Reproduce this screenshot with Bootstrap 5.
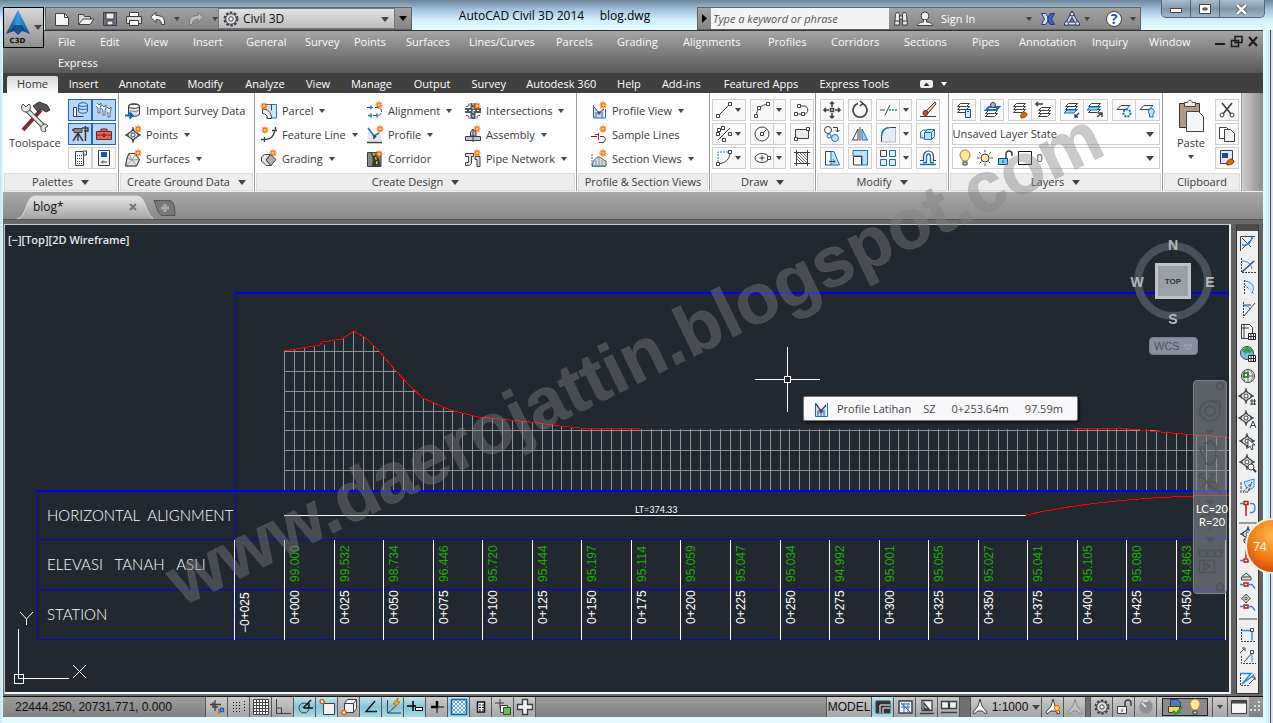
<!DOCTYPE html>
<html lang="en">
<head>
<meta charset="utf-8">
<meta name="viewport" content="width=device-width, initial-scale=1">
<title>AutoCAD Civil 3D 2014 - blog.dwg</title>
<link href="https://cdn.jsdelivr.net/npm/bootstrap@5.3.0/dist/css/bootstrap.min.css" rel="stylesheet">
<style>
:root{--ui:"Open Sans","Noto Sans",sans-serif;--cad:Lato,"Liberation Sans",sans-serif}
body{font:11px/16px var(--ui);color:#3a3a3a;background:#dff6fc;overflow:hidden}
button,select,input{font:inherit;color:inherit;border:0;padding:0;background:none;border-radius:0}
.frame{padding:0 10px 6px 3px;background:linear-gradient(90deg,#bfe4f4 0,#e4fbff 3px,#e4fbff calc(100% - 9px),#c5e9f8 calc(100% - 4px),#eafcff calc(100% - 3px),#445 calc(100% - 3px),#445 calc(100% - 2px),#e4e6ea calc(100% - 2px))}
.ic{width:16px;height:16px;flex:none;overflow:visible;fill:none;stroke:#3b3f46;stroke-width:1;display:block}
.caret{width:0;height:0;border:3px solid transparent;border-top:4px solid #444;border-bottom:0;flex:none}
.caret.big{border-width:4px 4px 0;border-top-width:5px}
/* title bar */
.glass{height:30px;margin:0 -10px 0 -3px;padding-left:45px;background:linear-gradient(#6c8498 0,#7d99ae 3px,#a4c4de 10px,#d2f0fb 20px,#e2ffff 30px)}
.bar3{background:linear-gradient(#a2a2a2,#858585);border:1px solid #626262;height:23px;margin-top:7px}
.qat{width:367px}
.doctitle{font-size:12px}
.appbtn{position:absolute;left:3px;top:7px;width:41px;height:41px;border:1px solid #000;background:linear-gradient(#d8d8d8,#8f8f8f);z-index:3}
.appbtn small{font:bold 7px/8px "DejaVu Sans",sans-serif;color:#111}
.ws{background:linear-gradient(#e3e3e3,#bcbcbc);border:1px solid #777;height:21px;color:#111;position:relative;font-size:12px}
.ws select,.combo select{appearance:none;width:100%;height:100%;outline:0}
.info{width:444px}
.info input{width:178px;height:21px;background:#f4f4f4;font-style:italic;padding-left:2px}
.info input::placeholder{color:#555}
.winbtns{width:104px;height:18px;border:1px solid #52687a;border-top:0;border-radius:0 0 5px 5px;background:linear-gradient(#a9bdcd,#7e97ab 9px,#9fb8ca);margin-left:20px;margin-right:8px}
.winbtns button{border-right:1px solid #52687a}
/* menus */
.menus{background:linear-gradient(#a6a6a6,#585858);border-top:1px solid #333;color:#fafafa;padding-left:55px}
.menulist{display:grid;grid-template-columns:42fr 44fr 49fr 53fr 59fr 49fr 52fr 63fr 87fr 61fr 66fr 85fr 63fr 73fr 68fr 47fr 73fr 57fr 66fr;flex:1;min-width:0}
.menulist a,.tabs3 a{color:inherit;text-decoration:none;white-space:nowrap;line-height:21px}
.tabs3{background:#404040;color:#fff;height:20px;display:grid;grid-template-columns:62fr 50fr 69fr 58fr 61fr 45fr 63fr 58fr 55fr 91fr 45fr 62fr 96fr 101fr 344fr;padding-left:4px}
.tabs3 a.home{background:linear-gradient(#d5d5d5,#fff);color:#333;width:51px;height:17px;margin-top:3px;line-height:16px;border-radius:2px 2px 0 0;text-align:center}
/* ribbon */
.ribbon{background:linear-gradient(90deg,#fff 92%,#fff 98.2%,#cfcfcf 98.3%,#8d8d8d);height:99px;border-bottom:1px solid #eee}
.pan{display:flex;flex-direction:column;background:#fdfdfd;border-right:1px solid #9a9a9a;min-width:0}
.pbody{height:80px;padding-top:6px;display:flex}
.ptitle{height:18px;background:#ededed;border:1px solid #dcdcdc;margin:0 1px;display:flex;align-items:center;justify-content:center;gap:8px;white-space:nowrap;line-height:16px}
.tool{display:flex;align-items:center;height:24px;gap:5px;white-space:nowrap}
.tool .caret{margin-left:1px}
.colm{display:flex;flex-direction:column}
.inset6{padding-left:6px}
.palrows{margin:0 2px 0 auto}
.rows{display:flex;flex-direction:column;gap:2px}
.rows>div{display:flex}
.sq{height:22px;width:24px;border:1px solid #cfcfcf;background:#f9f9f9;display:flex;align-items:center;justify-content:center;flex:none}
.sq+.joined{margin-left:-1px;width:25px}
.sq.on{background:#b9d5f3;border:1px solid #1f66b5}
.sq.s34{width:34px;gap:3px}
.sq.dd{width:13px;margin-left:-1px}
.bigtool{display:flex;flex-direction:column;align-items:center;line-height:16px}
.combo{height:22px;border:1px solid #cfcfcf;background:#fff;display:flex;align-items:center;position:relative;width:208px}
.over{position:absolute;right:5px;top:8px;pointer-events:none}
/* file tabs */
.ftabs{height:28px;background:linear-gradient(#a8a8a8,#8a8a8a);border-bottom:1px solid #555;padding-left:14px}
.ftab{width:136px;height:25px;margin-top:2px;position:relative;color:#111;font-size:12px}
.ftab>svg{position:absolute;inset:0}
.ftab span,.ftab button{position:relative}
/* drawing */
.work{background:#6a6a6a;padding:4px 0 2px 1px}
.canvas{background:#212830;border:1px solid #c8c8c8;border-bottom:2px solid #f2f2f2;border-right:2px solid #e8e8e8;position:relative;overflow:hidden}
.draw{position:absolute;left:-5px;top:-225px;width:1600px;height:1000px;overflow:visible;pointer-events:none}
.draw text{font-family:var(--cad)}
.lbl{font-size:15px;font-weight:300;fill:#fff}
.draw .num text{font:12px "Liberation Sans",sans-serif}
.draw .vp{font:600 11px var(--ui);fill:#e8e8e8}
.cube{position:absolute;right:12px;top:12px}
.tip3{position:absolute;left:798px;top:171px;width:275px;height:25px;background:#f8f8fa;border:1px solid #777;border-radius:2px;box-shadow:2px 2px 2px #0008;color:#444;padding-left:9px;white-space:nowrap}
.wcs{position:absolute;right:31px;top:112px;width:49px;height:18px;border:1px solid #7b7f8b;border-radius:4px;background:#8b8f9b;color:#4f545e;font:11px/16px "Liberation Sans",sans-serif;white-space:nowrap}
.navbar3{position:absolute;right:2px;top:155px;width:34px;height:214px;border-radius:4px;background:#8a8d9190;border:1px solid #7d8084}
.side{width:32px;padding:0 4px 0 5px;background:#606060;overflow:hidden}
.side>div{background:#efefef;border:1px solid #333;border-top:7px solid #4a4a4a;gap:6px;padding-top:5px}
.side hr{margin:0 1px;border-top:2px solid #999;opacity:1;width:18px}
.badge3{position:absolute;right:-28px;top:518px;width:56px;height:56px;border-radius:50%;border:2px solid #eee;background:radial-gradient(circle at 50% 30%,#ffb84a,#f08015 50%,#d84a0a 80%);color:#fff;font-size:12px;line-height:53px;padding-left:6px;z-index:5}
/* status bar */
.status{height:21px;background:linear-gradient(#9c9c9c,#808080);border-top:1px solid #111;color:#111;overflow:hidden}
.coord{width:202px;padding-left:12px;font:12px/20px "Liberation Sans",sans-serif;white-space:nowrap}
.sb{width:22px;height:20px;border-left:1px solid #555!important;background:linear-gradient(#cacaca,#a5a5a5);display:flex;align-items:center;justify-content:center;flex:none}
.sb.on{background:linear-gradient(#c5e3ea,#86c4d5 50%,#a8dbe6)}
.sb.txt{font:12px/20px "Liberation Sans",sans-serif}
.w-model{width:45px}.w-gap{width:11px;background:#6f6f6f}.w-scale{width:71px}.w-thin{width:5px;background:#6f6f6f}.w-tray{width:56px}.w-arrow{width:15px}.w-grip{width:14px;border:0!important;background:none}
.wm{position:absolute;inset:0;width:100%;height:100%;pointer-events:none;z-index:4}
.wm text{font:bold 71px "Liberation Sans",sans-serif;fill:#808080;fill-opacity:.42;stroke:#808080;stroke-opacity:.2;stroke-width:1}
</style>
</head>
<body>
<svg width="0" height="0" class="position-absolute" aria-hidden="true"><defs>
<linearGradient id="gA" x2="1"><stop stop-color="#0a3a78"/><stop offset=".5" stop-color="#3a9be0"/><stop offset="1" stop-color="#0b4a90"/></linearGradient>
<linearGradient id="gTab" x2="0" y2="1"><stop stop-color="#e6e6e6"/><stop offset="1" stop-color="#a4a4a4"/></linearGradient>
<pattern id="chk" width="4" height="4" patternUnits="userSpaceOnUse"><path fill="#e8f4ff" d="M0 0h4v4H0z"/><path fill="#6aa8d8" d="M0 0h2v2H0zM2 2h2v2H2z"/></pattern>
<g id="st"><path stroke="#ee5a10" d="M4 .5v7M.5 4h7M1.500 1.500l5 5M6.500 1.500l-5 5" stroke-width="1.2"/><circle cx="4" cy="4" r="1.5" fill="#ffe040" stroke="#f09010" stroke-width=".8"/></g>
<g id="node"><path fill="#e8ebee" stroke-width="1.3" d="M8 2l1.5 2.5 2.5 1.500L14.500 8l-2.500 2-2.500 1.500L8 14l-1.500-2.500L4 10 1.500 8 4 6l2.500-1.500z"/><path d="M8 0v4M8 12v4M0 8h4M12 8h4"/><circle cx="8" cy="8" r="2" fill="#fff"/></g>
<g id="new"><path fill="#f6f6f6" d="M1.500 2.500h9l4 4v8h-13z"/><path d="M10.500 2.500v4h4"/></g>
<g id="open"><path fill="#d8dadd" d="M.5 13V3.500h5l1 2h6V8"/><path fill="#f2f2f2" d="M.5 13.500L5 8h11l-4 5.500z"/></g>
<g id="save"><path fill="#6b7480" d="M1.500 1.500h13v13h-13z"/><path fill="#eee" d="M4 2h8v6H4zM5 10h6v4H5z"/></g>
<g id="print"><path fill="#fff" d="M3.500 1.500h9v4h-9z"/><path fill="#ddd" d="M.5 5.500h15v7H.5z"/><path fill="#fff" d="M3.500 9.500h9v5h-9z"/></g>
<g id="undo"><path fill="#f4f4f4" d="M.5 6L6 1.500v3c6 0 9 2 8.500 9h-3c0-4-2-5-5.500-5v3z"/></g>
<g id="redo"><path fill="#bbb" stroke="#777" d="M15.500 6L10 1.500v3c-6 0-9 2-8.500 9h3c0-4 2-5 5.500-5v3z"/></g>
<g id="gear"><circle cx="8" cy="8" r="6.500" stroke-width="2" stroke-dasharray="2.500 1.600"/><circle cx="8" cy="8" r="5.300" fill="#ddd"/><circle cx="8" cy="8" r="2.200" fill="#fff"/></g>
<g id="bino"><path fill="#e8e8e8" d="M2.500 3.500l1-2h2l1 2v10.500h-5zM9.500 3.500l1-2h2l1 2 1 10.500h-5zM6.500 5h3v3h-3zM1.500 10h5M9.500 10h5"/></g>
<g id="user"><circle cx="8" cy="5" r="4" fill="#f0f0f0"/><path fill="#f0f0f0" d="M6.500 9v2c-3 .5-6 1-6 3.500h15c0-2.500-3-3-6-3.500V9"/></g>
<g id="exch"><path fill="#d5def5" stroke="#203a80" d="M1.500 2.500h4l2.500 3.500v4L5.500 13.500h-4l3-5.500z"/><path fill="#3b63c0" stroke="#203a80" d="M14.500 2.500h-4L8 6v4l2.500 3.500h4l-3-5.500z"/></g>
<g id="a360"><path stroke="#26345c" stroke-width="4" d="M8 3.500L3 12.500h10z"/><path stroke="#d5daea" stroke-width="2" d="M8 3.500L3 12.500h10z"/><circle cx="8" cy="3" r="2" fill="#d5daea" stroke="#26345c"/><circle cx="2.500" cy="12.500" r="2" fill="#d5daea" stroke="#26345c"/><circle cx="13.500" cy="12.500" r="2" fill="#d5daea" stroke="#26345c"/></g>
<g id="help"><circle cx="8" cy="8" r="7.500" fill="#fff"/><text x="8" y="13" text-anchor="middle" font-size="14" font-weight="700" fill="#1c50b8" stroke="none">?</text></g>
<g id="cyl"><path fill="#dcdfe2" d="M3.500 3c0-3 11-3 11 0v8c0 3-11 3-11 0z"/><ellipse cx="9" cy="3.300" rx="5.500" ry="2" fill="#fff"/><path stroke="#888" d="M4 7c1 2 9 2 10 0"/></g>
<g id="import"><use href="#cyl"/><path stroke="#0a62c4" stroke-width="2" d="M0 12.500h7M4.500 9.500l3 3-3 3"/></g>
<g id="points"><use href="#node"/><use href="#st" x="9" y="-2"/></g>
<g id="surf"><path fill="#e4e6e9" stroke="#999" d="M4 2.500h6l4.500 6-3 6.500H.5L2 7zM4 2.500L7 9l3.500-6M7 9L.5 15M7 9l5 6M7 9l7.500-.5M7 9L2 7"/><path d="M4 2.500h6l4.500 6-3 6.500H.5L2 7z"/><use href="#st" x="9" y="-2"/></g>
<g id="parcel"><path fill="#cfe6f8" stroke="#2878c0" d="M5 1.500h10.500V15H5"/><path fill="#eee" d="M1.500 6c5 0 9 3 9 9.500h-4c0-3-2-5-5-5zM10.500 1.500v6"/><use href="#st" x="-1" y="-1"/></g>
<g id="feat"><path d="M2.500 12.500c8 0 10-3 11.500-9M11 3.500h5M14.500 0v3M0 12.500h4M3.500 10v5" stroke-width="1.300"/><use href="#st" y="-1"/></g>
<g id="grade"><path fill="#e2e5e8" d="M3.500 3.500h6L5 9l5 5.500H5L.5 10V6z"/><path fill="#a9b0b8" d="M5 9l4.500-5.500L15 8.500l-5 6z"/><use href="#st" x="8" y="-2"/></g>
<g id="align"><path d="M0 4.500h6M8 4.500h2c6 0 6 8 0 8H4" stroke-dasharray="4 1"/><path stroke="#1a7ad6" stroke-width="1.500" d="M4 2.500v4M4 10.500v4M10 10.500v4M1 12.500h3"/><use href="#st" x="8" y="-2"/></g>
<g id="prof"><path fill="#e3e6ea" stroke="none" d="M1 2l6 8 6-5 2 9H1z"/><path stroke="#1a6ac8" d="M1 1l6 8 5-3" stroke-width="1.500"/><path d="M7 8v3l2-2M0 15.500h15" stroke-width="1.500"/><use href="#st" x="9" y="-2"/></g>
<g id="corr"><path fill="#888b8e" d="M.5 1.500H14v14H.5z"/><path fill="#333" d="M4 2c6 0 8 5 9 13H5C7 9 6 5 4 2z"/><path stroke="#f0c000" stroke-width="1.600" stroke-dasharray="3 1.500" d="M6 2c3 4 4 8 4 13"/><use href="#st" x="8" y="-1"/></g>
<g id="inter"><path stroke-width="5" stroke="#50565e" d="M8 0v16M0 7.500h16"/><path stroke="#fff" stroke-dasharray="2 2" d="M8 0v16M0 7.500h16"/><path d="M1 3.500c3 0 3-1 3-3M1 12.500c3 0 3 1 3 3M15 12.500c-3 0-3 1-3 3"/><use href="#st" x="8" y="-1"/></g>
<g id="assem"><path fill="#bfc5cc" d="M5.500 5L8 2l3 3v4H5.500zM.5 9.500h15v4H.5z"/><path d="M8 3v12"/><use href="#st" x="8" y="-2"/></g>
<g id="pipe"><path fill="#dadde0" d="M.5 2.500h8v3h-2v7l-2 2h-4v-3h3v-6h-3zM10 5.500h5v10h-3v-7h-2z"/><use href="#st" x="8" y="-2"/></g>
<g id="pview"><path fill="#d5dbe2" stroke="none" d="M2 4l5 6 6-5v10H2z"/><path stroke="#1a6ac8" d="M2.500 2v13h12V6M5 9v6M11 9v6"/><path d="M3 4l5 6 5-4M7 9h2v2H7z"/><use href="#st" x="8" y="-2"/></g>
<g id="ptip"><path fill="#d5dbe2" stroke="none" d="M2 4l6 6 5-5v10H2z"/><path stroke="#1a6ac8" d="M2.500 2v13.500h12V2M5 9v6M11 9v6M8 12v3"/><path stroke-width="1.300" d="M3 3l5 7 5-6M7 9h2v2H7z"/></g>
<g id="sline"><path d="M0 9.500h6M9 9.500h3c3 0 3 5 0 6H8"/><path stroke="#e01818" d="M4 7.500h4M7.500 6v7"/><use href="#st" x="8" y="-2"/></g>
<g id="sview"><path fill="#d5dbe2" stroke="#555" d="M1 15c2-8 5-9 7-9s5 4 7 4v5z"/><path stroke="#1a6ac8" d="M1 3v12.500h14.500" stroke-dasharray="2 1"/><path stroke="#8a94a0" d="M5 9v6M8 7v8M11 9v6"/><use href="#st" x="8" y="-2"/></g>
<g id="sqs"><path fill="#fff" d="M-1.500-1.500h3v3h-3z"/></g>
<g id="line"><path d="M2 14L14 2"/><use href="#sqs" x="2" y="14"/><use href="#sqs" x="14" y="2"/></g>
<g id="arc"><path d="M2 14C3 7 7 3 14 2"/><use href="#sqs" x="2" y="14"/><use href="#sqs" x="5" y="6"/><use href="#sqs" x="14" y="2"/></g>
<g id="pline"><path d="M2 12h8c5 0 5-8 0-8H5"/><use href="#sqs" x="2" y="12"/><use href="#sqs" x="9" y="12"/><use href="#sqs" x="5" y="4"/></g>
<g id="pts"><path d="M2 14L14 2"/><use href="#sqs" x="3" y="4"/><use href="#sqs" x="7" y="2"/><use href="#sqs" x="2" y="8"/><use href="#sqs" x="8" y="14"/><use href="#sqs" x="14" y="8"/></g>
<g id="circ"><circle cx="8" cy="8" r="7"/><path d="M8 8l4-4"/><use href="#sqs" x="8" y="8"/></g>
<g id="rect"><path fill="#e8eaec" d="M1.500 3.500h13v9h-13z"/><use href="#sqs" x="2" y="13"/><use href="#sqs" x="14" y="3"/></g>
<g id="spl"><path stroke="#1a7ad6" stroke-dasharray="2 1" d="M2 12V2h11"/><path d="M14 2c0 7-4 11-12 12"/><use href="#sqs" x="14" y="2"/><use href="#sqs" x="2" y="14"/></g>
<g id="ell"><ellipse cx="8" cy="8" rx="7" ry="4.500"/><path d="M8 5.500v5M5.500 8h5"/><use href="#sqs" x="15" y="8"/></g>
<g id="hatch"><path stroke="#777" d="M3 6l8 8M3 9l4 4M3 3l10 10M6 3l7 7M9 3l4 4"/><path d="M2.500 0v16M13.500 0v16M0 2.500h16M0 13.500h16"/></g>
<g id="move"><path stroke-width="1.500" d="M8 0v5M8 11v5M0 8h5M11 8h5M6 2l2-2 2 2M6 14l2 2 2-2M2 6L0 8l2 2M14 6l2 2-2 2M6.500 6.500h3v3h-3z"/></g>
<g id="rot"><path stroke-width="1.500" d="M6 1.500A7 7 0 1 0 10 1.500M8-1l3 2.500L8 4"/></g>
<g id="trim"><path d="M0 8h5M5 13L10 3"/><path stroke="#1a7ad6" stroke-dasharray="2 1" d="M9 8h8" stroke-width="1.300"/></g>
<g id="erase"><path fill="#e8c890" d="M15 0L6 9l2 2 8-9z"/><circle cx="5.500" cy="11" r="2.500" fill="#d85020"/><path d="M0 14.500h16"/></g>
<g id="copy2"><circle cx="4" cy="4" r="3.500"/><circle cx="11" cy="12" r="3.500" fill="#bfe0f5" stroke="#2070b0"/><circle cx="5" cy="10" r="2" stroke="#2070b0"/><path d="M9 1.500h4.500V6M11.500 4l2 2 2-2"/></g>
<g id="mirror"><path d="M6 3v11H.5zM8 1v14"/><path fill="#9fd0f0" stroke="#1a70b8" d="M10 3v11h5.500z"/></g>
<g id="fillet"><path fill="#e0eef8" d="M1.500 16V9c0-5 3-7.500 8-7.500h6V16z" stroke="#bbb"/><path stroke="#1a70c0" stroke-width="1.500" d="M1.500 10c0-5 4-8.500 8-8.500"/><path d="M1.500 10v6M10 1.500h6"/></g>
<g id="box3"><path fill="#bfe0f5" stroke="#1a70b0" d="M4.500 6.500h7v7h-7zM4.500 6.500l3-3h7l-3 3M14.500 3.500v7l-3 3M.5 6v6h4M.5 6l3-2h4"/></g>
<g id="stretch"><path fill="#bfe0f5" stroke="#1a70b0" d="M7 1.500h3L15.500 15H7z"/><path d="M7 1.500H1.500V15H7M5 11.500h6M9 9.500l2 2-2 2"/></g>
<g id="scale"><path fill="#bfe0f5" stroke="#1a70b0" d="M1 .5h14.500V15H10V6H1z"/><path fill="#fff" d="M1.500 6.500h8V15h-8z"/></g>
<g id="array"><path d="M.5.500h6v6h-6z"/><path fill="#dff0fb" stroke="#1a70b0" d="M9.500.5h6v6h-6zM.5 9.500h6v6h-6zM9.500 9.500h6v6h-6z"/></g>
<g id="offset"><path d="M0 10.500h3.500V7c0-8 10-8 10 0v3.500H16" stroke-width="1.200"/><path stroke="#1a70b0" stroke-width="1.300" d="M0 14.500h16M3 12.500h3.500V7c0-4 4-4 4 0v5.500H14"/></g>
<g id="lay"><path fill="#fff" d="M4.500 8.500h9l-3 3h-9z"/><path fill="#fff" d="M4.500 5.500h9l-3 3h-9z"/><path fill="#fff" d="M4.500 2.500h9l-3 3h-9z"/></g>
<g id="l1"><use href="#lay" y="-1"/><path fill="#dde8f5" stroke="#124a90" d="M9.500 7.500h5v8h-5zM11 9.500h2"/></g>
<g id="l2"><use href="#lay" y="3"/><path stroke="#1a70c0" stroke-width="2" d="M2 8l3-3h10l-3 3z"/><circle cx="9" cy="3" r="2.500" fill="#bbb"/></g>
<g id="l3"><use href="#lay" y="-1"/><path fill="#d0700c" stroke="#a04800" d="M9 16c-1-3 1-6 4-6l2 2c0 3-3 4-6 4z"/></g>
<g id="l4"><use href="#lay" x="2" y="3"/><path stroke-width="1.500" d="M1 2h7M3 0L1 2l2 2"/></g>
<g id="l5"><use href="#lay" y="-1"/><path fill="#8ad4ee" stroke="#1a70c0" d="M3 8h10l-3 3H0z"/><path stroke-width="1.400" d="M15 11l-4 4m0-3v3h3"/></g>
<g id="l6"><use href="#lay" y="-1"/><path fill="#8ad4ee" stroke="#1a70c0" d="M3 5h10l-3 3H0z"/><path stroke-width="1.400" d="M10 15l5-4m-4 0h4v4"/></g>
<g id="l7"><path d="M5 3.500h9l-4 4H1z"/><circle cx="11" cy="11" r="3.500" stroke="#1a70c0" stroke-dasharray="2 1" stroke-width="2"/></g>
<g id="l8"><path d="M5 3.500h9l-4 4H1z"/><path fill="#bfe0f5" stroke="#1a70c0" d="M10.500 12a3 3 0 1 1 3.500 0v3h-3.500z"/></g>
<g id="bulb"><path fill="#ffe69a" stroke="#a8842a" d="M5.500 11c0-2-2.500-3-2.500-6a5 5 0 0 1 10 0c0 3-2.500 4-2.500 6z"/><path fill="#ccc" d="M6 12h4v3H6z"/></g>
<g id="sun"><path d="M8 0v16M0 8h16M2 2l12 12M14 2L2 14" stroke-dasharray="2.500 11"/><circle cx="8" cy="8" r="4" fill="#ffeaa0"/></g>
<g id="unlock"><path d="M9 8V4a3 3 0 0 1 6 0v2" stroke-width="1.500"/><path fill="#7fd0ea" stroke="#124a70" d="M1.500 8.500h9v6h-9zM6 10v3"/></g>
<g id="cut"><path d="M3 1l9 11M13 1L4 12" stroke-width="1.600"/><circle cx="3" cy="13" r="2"/><circle cx="13" cy="13" r="2"/></g>
<g id="copy"><path fill="#fff" d="M.5 1.500h7l2 2v9h-9z"/><path fill="#f4f4f4" d="M5.500 3.500h6l4 4v8h-10z"/></g>
<g id="match"><path fill="#e4e8ee" d="M1.500.5h12v13h-12z"/><path fill="#1a4a90" stroke="none" d="M3 3h6v5H3z"/><path fill="#d0700c" stroke="#7a3800" d="M8 15c-1-3 1-6 5-6l2 2c0 3-4 4-7 4z"/></g>
<g id="pal1"><path fill="#fff" d="M1.500 5.500h3v9h-3zM1.500 14.500h10"/><path fill="#bfe0f8" stroke="#1a62b8" d="M6.500 3c0-3 9-3 9 0v6c0 3-9 3-9 0zM6.500 3c0 2 9 2 9 0M6.500 6c0 2 9 2 9 0"/></g>
<g id="pal2"><path fill="#fff" stroke="#4a6484" d="M1 1l2 2 2-2v3L4 6v5H2V6L0 4M6 3l2 2 2-2v3L9 8v5H7V8L5 6M11 5l2 2 2-2v3l-1 2v5h-2v-5"/></g>
<g id="pal3"><path fill="#888" d="M2 2.500h8v4H2z"/><path d="M6 7v8M6 7l-5 8M6 7l5 8M13.500 0v15M10 2h6v3h-4M0 4h2" stroke-width="1.500"/></g>
<g id="pal4"><path fill="#d86a60" stroke="#7a2018" d="M.5 5.500h15v8H.5zM.5 9h15M7 8h2v2.500H7zM5 5V3h6v2"/></g>
<g id="pal5"><path fill="#f4f4f4" d="M3.500 1.500h8v14h-8zM11.500 1h3v4h-3"/><path stroke-dasharray="1 1" d="M5 5.500h5M5 8.500h5M5 11.500h5M5 13.500h5"/></g>
<g id="pal6"><path fill="#f4f4f4" d="M2.500.5h11v15h-11z"/><path fill="#1a5aa0" stroke="none" d="M5 2h6v5H5z"/><path d="M6 12h5M7 10.500L5.500 12 7 13.500"/></g>
<g id="s1"><path stroke-width="1.300" d="M6 1v11M1 5.500h11M4 3v5h5"/><path stroke="#1a60c0" stroke-width="1.300" d="M11.500 9.500h3v3h-3z"/><path stroke="#e04010" stroke-width="1.300" d="M10 15v-5"/></g>
<g id="s2"><path stroke="#111" stroke-dasharray="1 2" d="M2 3.500h9M2 6.500h9M2 9.500h9M2 12.500h9M13.500 2v12"/></g>
<g id="s3"><path fill="#fff" stroke="#444" d="M.5.500h15v15H.5zM3.500.5v15M6.500.5v15M9.500.5v15M12.500.5v15M.5 3.500h15M.5 6.500h15M.5 9.500h15M.5 12.500h15"/></g>
<g id="s4"><path d="M1.500 0v14.500H16M1.500 9h5v5"/></g>
<g id="s5"><circle cx="7" cy="9" r="5"/><path stroke="#111" stroke-width="1.300" d="M6 9L14 1M7 9h9M12 4v5"/></g>
<g id="s6"><path fill="#f2f2f2" d="M4.500 4.500h11v11h-11z"/><circle cx="3" cy="2.500" r="2" fill="#fff" stroke="#e05a10" stroke-width="1.400"/></g>
<g id="s7"><path fill="#f2f2f2" d="M3.500 4.500l3-4h9v9l-3 4h-9zM3.500 4.500h9v9M12.500 4.500l3-4"/><circle cx="3" cy="13.500" r="2" fill="#fff" stroke="#e05a10" stroke-width="1.400"/></g>
<g id="s8"><path stroke="#111" stroke-width="1.400" d="M12 2L3 12.500h11"/></g>
<g id="s9"><path d="M2.500 1v13H16M3 14L13 5"/><path fill="#f8c030" stroke="#c07000" d="M13-1L8 5h3l-2 4 6-6h-3z"/></g>
<g id="s10"><path stroke="#000" stroke-width="1.500" d="M6 2v10M0 7h9"/><path fill="#fff" stroke="#000" d="M8.500 8.500h7v3h-7z"/></g>
<g id="s11"><path stroke="#000" d="M2 8h13M8 8v6"/><path stroke="#000" stroke-width="2.500" d="M2 8h6V2"/></g>
<g id="s12"><path fill="url(#chk)" stroke="#1a60b8" stroke-width="1.500" d="M.5.500h15v15H.5z"/></g>
<g id="s13"><path fill="#fff" stroke="#111" stroke-width="1.500" d="M4.500 3h7v10h-7z"/><path stroke="#111" stroke-dasharray="2 1" d="M6 6h5M6 8.500h5M6 11h5"/></g>
<g id="s14"><path d="M5 0v9M0 4h9"/><path fill="#fff" d="M5.500 6.500h7v7h-7z"/><path fill="#70b860" stroke="#1a6010" d="M8.500 8.500h7v7h-7z"/></g>
<g id="s15"><path fill="#f4f4f8" stroke-width="1.400" d="M5.500.5h5v5h5v5h-5v5h-5v-5h-5v-5h5z"/></g>
<g id="m1"><path fill="#333" d="M1 2h14v12H1z"/><path stroke="#fff" d="M5 14V6h10M8 14V9h7"/></g>
<g id="m2"><path fill="#f2f2f2" stroke-width="1.500" d="M2 2h13v12H2z"/><path stroke="#3a70b0" d="M4 5h9M4 8h9M7 4v9M11 4v9M4 4l9 9"/></g>
<g id="m3"><path fill="#f2f2f2" stroke-width="1.300" d="M3 1.500h10v10H3zM1 14.500h14M5 4v6h5z"/></g>
<g id="m4"><path fill="#f2f2f2" stroke-width="1.300" d="M.5 2.500h7v7h-7zM8.500 2.500h7v7h-7zM0 13.500h16"/></g>
<g id="sc"><path fill="#f4f4f4" d="M8 0l2 7 5 6-1 2-4-3H6l-4 3-1-2 5-6z"/></g>
<g id="scg"><path fill="#c4c4c4" stroke="#8a8a8a" d="M8 0l2 7 5 6-1 2-4-3H6l-4 3-1-2 5-6z"/></g>
<g id="sc2"><use href="#sc"/><circle cx="12" cy="9" r="2.500" fill="#ffd040" stroke="#d07010"/><path stroke="#c04010" d="M12 12v4"/></g>
<g id="lockg"><path d="M9 8V4a3 3 0 0 1 6 0v3" stroke-width="1.500"/><path fill="#f0f0f0" d="M1.500 7.500h9v7h-9zM6 10v3"/></g>
<g id="perf"><circle cx="8" cy="8" r="7" fill="#8d8f92" stroke="#aaa"/><path stroke="#eee" stroke-width="1.500" d="M8 8L4 4M5 2h5"/></g>
<g id="pdf"><path fill="#4a7ab8" d="M3.500.5h7l3 3v6h-10z"/><path fill="#f8d850" d="M1.500 7.500h11v6h-11z"/><path stroke="#2aa02a" stroke-width="2.500" d="M6 12l3 3 6-7"/></g>
<g id="clean"><path fill="#f6f6f6" d="M.5 1.500h15v13H.5z"/><path fill="#555" d="M1 2h14v2H1z"/></g>
<g id="ang"><path stroke-dasharray="2 1" d="M1.500 0v14.500H16"/><path d="M2 14L14 3" stroke-width="1.300"/><path stroke="#2a8ae0" d="M2 3c6 0 9 3 10 8"/></g>
<g id="t1"><path d="M.5 15V.5H15M2 2l9 9M13 2L2 13"/><path stroke="#2a8ae0" stroke-width="1.500" d="M2 9c6 1 9-2 10-8"/></g>
<g id="t3"><path stroke-dasharray="2 1" d="M4.500 0v15M5 5l9 9"/><path fill="#d5e8f8" stroke="#2a8ae0" d="M5 1c10 1 10 10 6 12"/></g>
<g id="t4"><path stroke-dasharray="2 1" d="M3.500 0v16"/><path d="M4 14L15 1M3 3h8"/><path stroke="#2a8ae0" d="M4 4c4 0 6 1 6 4"/></g>
<g id="t5"><path fill="#f2f2f2" d="M1.500.5h8l3 3v11h-11zM4 1v13M1 4h8"/><use href="#cal"/></g>
<g id="cal"><path fill="#fff" stroke="#222" d="M8.500 9.500h7v6h-7zM8.500 12.500h7M11 9.500v6M13.500 9.500v6"/></g>
<g id="t6"><circle cx="7" cy="7" r="6.500" fill="#78c4dc"/><path fill="#3a9a50" stroke="none" d="M2 4l5-3 6 3-3 4-2-2-3 2z"/><use href="#cal"/></g>
<g id="t7"><circle cx="8" cy="8" r="6.500" fill="#eee"/><path stroke="#777" d="M8 2v12M2 8h12M5 3c-2 4-2 7 0 10M11 3c2 4 2 7 0 10"/><path fill="#fff" stroke="#107010" stroke-width="1.500" d="M4 5h4v4H4z"/></g>
<g id="n1"><use href="#node" x="-2" y="-2"/><path d="M10 11h6M10 14h6M12 9v6M14.500 9v6"/></g>
<g id="n2"><use href="#node" x="-2" y="-2"/><path d="M10 16l3-7 3 7M11 13.500h4"/></g>
<g id="n3"><use href="#node" x="-1" y="-1"/><path fill="#fff" d="M8 5v9l2-2 2 4 1-1-1-4h3z"/></g>
<g id="n4"><use href="#node" x="-1" y="-2"/><circle cx="11" cy="11" r="3" fill="#fff"/><path d="M13 13l3 3" stroke-width="2"/></g>
<g id="n5"><path fill="#d5e8f8" stroke="#2a8ae0" d="M4 4l10-3v8l-6 4z"/><path fill="#ddd" d="M3 14l9-10-4 10zM1 4v11" stroke-dasharray="3 1"/></g>
<g id="n6"><path stroke="#c01818" stroke-width="1.500" d="M6 5v11M4 1.500h4v3H4z"/><path stroke="#2a8ae0" d="M0 3.500h3M10 3.500h2c4 0 4 8 0 9h-2" stroke-width="1.300"/></g>
<g id="n7"><use href="#node" y="-4"/><path fill="#bbb" d="M4 9h8v3l-4 4-4-4z"/></g>
<g id="n8"><path stroke="#c01818" stroke-width="1.500" d="M6-2v8M4 7h4v3H4z"/><path stroke="#2a8ae0" stroke-width="1.400" d="M0 8.500h3M9 8.500h4c2 1 3 3 3 5"/></g>
<g id="n9"><path fill="#ddd" d="M1.500 3l4.500-4 5 4v3h-9.500zM2 3h8"/><path stroke="#c01818" stroke-width="1.500" d="M4 9h4v3H4z"/><path stroke="#2a8ae0" stroke-width="1.400" d="M0 10.500h3M9 10.500h3l3 4"/></g>
<g id="n10"><path fill="#ddd" d="M6-2l2 2.500L10.500 2.500 8 4.500 6 7 4 4.500 1.500 2.500 4 .5z"/><circle cx="6" cy="2.500" r="1.200" fill="#fff"/><path stroke="#c01818" stroke-width="1.500" d="M4 9h4v3H4z"/><path stroke="#2a8ae0" stroke-width="1.400" d="M0 10.500h3M9 10.500h3l3 4"/></g>
<g id="d1"><path stroke-dasharray="2 1" d="M1.500 3v12.500H16"/><path stroke="#2a8ae0" stroke-width="1.400" d="M2 4.500h10v10"/><use href="#sqs" x="12" y="4"/></g>
<g id="d2"><path stroke-dasharray="2 1" d="M1.500 8v7.500H16"/><path d="M0 5l4-4M2 0h3v3M4 14l8-9"/><path stroke="#2a8ae0" d="M12 5v9"/><use href="#sqs" x="12" y="4"/></g>
<g id="d3"><path stroke-dasharray="2 1" d="M.5 4v11.500H10"/><path stroke="#2a8ae0" stroke-width="1.400" d="M0 3.500h11L2 14l12-9"/><path d="M9 14l6-6M12 7h3v3"/></g>
</defs></svg>

<div class="frame d-flex flex-column vh-100 position-relative">
 <button class="appbtn d-flex align-items-center justify-content-center" aria-label="Application menu">
  <span class="d-flex flex-column align-items-center">
   <svg width="24" height="27"><path fill="url(#gA)" d="M12 0l12 24-8-3-4 4-4-4-8 3z"/><path fill="#072a5c" d="M8 15h8l4 7-4-1-4 4-4-4-4 1z" opacity=".6"/></svg><small>C3D</small></span>
  <span class="caret big ms-1"></span>
 </button>

 <header class="glass d-flex">
  <div class="bar3 qat d-flex align-items-center ps-2">
   <button class="me-2" aria-label="New"><svg class="ic"><use href="#new"/></svg></button>
   <button class="me-2" aria-label="Open"><svg class="ic"><use href="#open"/></svg></button>
   <button class="me-2" aria-label="Save"><svg class="ic"><use href="#save"/></svg></button>
   <button class="me-2" aria-label="Plot"><svg class="ic"><use href="#print"/></svg></button>
   <button class="me-2 d-flex align-items-center gap-2" aria-label="Undo"><svg class="ic"><use href="#undo"/></svg><i class="caret"></i></button>
   <button class="d-flex align-items-center gap-2" aria-label="Redo"><svg class="ic"><use href="#redo"/></svg><i class="caret"></i></button>
   <div class="ws d-flex align-items-center flex-grow-1 ps-1 gap-1"><svg class="ic"><use href="#gear"/></svg><select aria-label="Workspace"><option>Civil 3D</option></select><i class="caret big over"></i></div>
   <button class="px-1 h-100" aria-label="Customize"><i class="caret big d-block" style="border-top-color:#000"></i></button>
  </div>
  <div class="doctitle flex-grow-1 text-center text-black pt-2 text-nowrap">AutoCAD Civil 3D 2014 &nbsp; &nbsp; blog.dwg</div>
  <div class="bar3 info d-flex align-items-center text-white">
   <button class="px-1" aria-label="Expand search"><svg width="5" height="9" class="d-block"><path d="M0 0l5 4.500L0 9z"/></svg></button>
   <input type="text" placeholder="Type a keyword or phrase" aria-label="Search">
   <button class="ms-1" aria-label="Find"><svg class="ic"><use href="#bino"/></svg></button>
   <button class="ms-2 d-flex align-items-center gap-1 flex-grow-1" aria-label="Sign In"><svg class="ic"><use href="#user"/></svg><span class="me-auto ps-1">Sign In</span><i class="caret me-2"></i></button>
   <button aria-label="Exchange"><svg class="ic"><use href="#exch"/></svg></button>
   <button class="ms-2 d-flex align-items-center gap-1" aria-label="Autodesk 360"><svg class="ic"><use href="#a360"/></svg><i class="caret"></i></button>
   <button class="ms-3 me-1 d-flex align-items-center gap-2" aria-label="Help"><svg class="ic"><use href="#help"/></svg><i class="caret"></i></button>
  </div>
  <div class="winbtns d-flex">
   <button class="flex-fill" aria-label="Minimize"><svg width="14" height="9"><path fill="#fff" stroke="#444" d="M1.500 3.500h11v4h-11z"/></svg></button>
   <button class="flex-fill" aria-label="Maximize"><svg width="14" height="11"><path fill="#fff" fill-rule="evenodd" stroke="#444" d="M1.500.5h11v9h-11zM5 4h4v2H5z"/></svg></button>
   <button class="flex-fill border-0 px-2" aria-label="Close"><svg width="14" height="11"><path stroke="#444" stroke-width="4" d="M2 1l9 9M11 1l-9 9"/><path stroke="#fff" stroke-width="2.500" d="M2 1l9 9M11 1l-9 9"/></svg></button>
  </div>
 </header>

 <nav class="menus d-flex align-items-start">
  <div class="menulist">
   <a href="#">File</a><a href="#">Edit</a><a href="#">View</a><a href="#">Insert</a><a href="#">General</a><a href="#">Survey</a><a href="#">Points</a><a href="#">Surfaces</a><a href="#">Lines/Curves</a><a href="#">Parcels</a><a href="#">Grading</a><a href="#">Alignments</a><a href="#">Profiles</a><a href="#">Corridors</a><a href="#">Sections</a><a href="#">Pipes</a><a href="#">Annotation</a><a href="#">Inquiry</a><a href="#">Window</a><a href="#">Express</a>
  </div>
  <svg width="48" height="20" fill="none" stroke="#1a1a1a" stroke-width="2" aria-hidden="true"><path d="M0 13h10M34 6l8 9M42 6l-8 9"/><path stroke-width="1.500" d="M20 5.500h7v6h-7zM16.500 9.500h7v6h-7z"/></svg>
 </nav>
 <nav class="tabs3">
  <a href="#" class="home">Home</a><a href="#">Insert</a><a href="#">Annotate</a><a href="#">Modify</a><a href="#">Analyze</a><a href="#">View</a><a href="#">Manage</a><a href="#">Output</a><a href="#">Survey</a><a href="#">Autodesk 360</a><a href="#">Help</a><a href="#">Add-ins</a><a href="#">Featured Apps</a><a href="#">Express Tools</a>
  <button class="d-flex align-items-center gap-2 align-self-center" aria-label="Minimize ribbon"><svg width="13" height="8"><rect width="13" height="8" rx="2" fill="#eee"/><path d="M3.500 6L6.500 2.500 9.500 6z" fill="#333"/></svg><i class="caret" style="border-top-color:#fff"></i></button>
 </nav>

 <section class="ribbon d-flex">
  <div class="pan" style="flex:0 0 116px">
   <div class="pbody inset6">
    <button class="bigtool"><svg width="32" height="36" fill="none"><path stroke="#7a3028" stroke-width="4" d="M4 31L22 11"/><path fill="#555" stroke="#333" d="M14 7l6-4 8 3 3 5-4 2-5-3-3 3z"/><path stroke="#444" stroke-width="5" d="M8 11l16 16"/><path stroke="#e4e6e8" stroke-width="3" d="M8 11l16 16"/><path fill="#e4e6e8" stroke="#444" d="M4 5l3 3 3-3c3 3 1 8-3 8s-6-4-3-8zM22 30c-1-4 4-7 7-3l-3 2 1 3c-2 1-5 1-5-2z"/></svg>Toolspace</button>
    <div class="rows palrows">
     <div><button class="sq on" aria-label="Toolspace"><svg class="ic"><use href="#pal1"/></svg></button><button class="sq on" aria-label="Settings"><svg class="ic"><use href="#pal2"/></svg></button></div>
     <div><button class="sq on" aria-label="Survey"><svg class="ic"><use href="#pal3"/></svg></button><button class="sq on" aria-label="Toolbox"><svg class="ic"><use href="#pal4"/></svg></button></div>
     <div><button class="sq" aria-label="Panorama"><svg class="ic"><use href="#pal5"/></svg></button><button class="sq" aria-label="Properties"><svg class="ic"><use href="#pal6"/></svg></button></div>
    </div>
   </div>
   <div class="ptitle">Palettes <i class="caret big"></i></div>
  </div>
  <div class="pan" style="flex:0 0 136px">
   <div class="pbody"><div class="colm inset6">
    <button class="tool"><svg class="ic"><use href="#import"/></svg>Import Survey Data</button>
    <button class="tool"><svg class="ic"><use href="#points"/></svg>Points <i class="caret"></i></button>
    <button class="tool"><svg class="ic"><use href="#surf"/></svg>Surfaces <i class="caret"></i></button>
   </div></div>
   <div class="ptitle">Create Ground Data <i class="caret big"></i></div>
  </div>
  <div class="pan" style="flex:0 0 322px">
   <div class="pbody inset6">
    <div class="colm" style="width:106px">
     <button class="tool"><svg class="ic"><use href="#parcel"/></svg>Parcel <i class="caret"></i></button>
     <button class="tool"><svg class="ic"><use href="#feat"/></svg>Feature Line <i class="caret"></i></button>
     <button class="tool"><svg class="ic"><use href="#grade"/></svg>Grading <i class="caret"></i></button>
    </div>
    <div class="colm" style="width:98px">
     <button class="tool"><svg class="ic"><use href="#align"/></svg>Alignment <i class="caret"></i></button>
     <button class="tool"><svg class="ic"><use href="#prof"/></svg>Profile <i class="caret"></i></button>
     <button class="tool"><svg class="ic"><use href="#corr"/></svg>Corridor</button>
    </div>
    <div class="colm">
     <button class="tool"><svg class="ic"><use href="#inter"/></svg>Intersections <i class="caret"></i></button>
     <button class="tool"><svg class="ic"><use href="#assem"/></svg>Assembly <i class="caret"></i></button>
     <button class="tool"><svg class="ic"><use href="#pipe"/></svg>Pipe Network <i class="caret"></i></button>
    </div>
   </div>
   <div class="ptitle">Create Design <i class="caret big"></i></div>
  </div>
  <div class="pan" style="flex:0 0 133px">
   <div class="pbody inset6"><div class="colm ps-2">
    <button class="tool"><svg class="ic"><use href="#pview"/></svg>Profile View <i class="caret"></i></button>
    <button class="tool"><svg class="ic"><use href="#sline"/></svg>Sample Lines</button>
    <button class="tool"><svg class="ic"><use href="#sview"/></svg>Section Views <i class="caret"></i></button>
   </div></div>
   <div class="ptitle">Profile &amp; Section Views</div>
  </div>
  <div class="pan" style="flex:0 0 106px">
   <div class="pbody justify-content-center"><div class="rows" id="drawTools"></div></div>
   <div class="ptitle">Draw <i class="caret big"></i></div>
  </div>
  <div class="pan" style="flex:0 0 133px">
   <div class="pbody ps-1"><div class="rows" id="modTools"></div></div>
   <div class="ptitle">Modify <i class="caret big"></i></div>
  </div>
  <div class="pan" style="flex:0 0 214px">
   <div class="pbody justify-content-center"><div class="rows">
    <div class="gap-1" id="layTools"></div>
    <div><div class="combo"><select class="ps-0" aria-label="Layer state"><option>Unsaved Layer State</option></select><i class="caret big over"></i></div></div>
    <div><div class="combo ps-1 gap-1"><svg class="ic"><use href="#bulb"/></svg><svg class="ic"><use href="#sun"/></svg><svg class="ic"><use href="#unlock"/></svg><svg class="ic"><path fill="#fff" stroke="#111" d="M1.500 1.500h13v13h-13z"/></svg><select aria-label="Layer"><option>0</option></select><i class="caret big over"></i></div></div>
   </div></div>
   <div class="ptitle">Layers <i class="caret big"></i></div>
  </div>
  <div class="pan" style="flex:0 0 79px">
   <div class="pbody">
    <button class="bigtool ms-2 me-1" style="width:40px"><svg width="32" height="36"><path fill="#b09a88" stroke="#333" d="M4.500 4.500h20v24h-20z"/><path fill="#eee" stroke="#444" d="M9.500 3.500h3c1-3 4-3 5 0h3v4h-11z"/><path fill="#f4f6f8" stroke="#444" d="M11.500 12.500h12l5 5v15h-17z"/></svg>Paste<i class="caret mt-1"></i></button>
    <div class="rows"><div><button class="sq" aria-label="Cut"><svg class="ic"><use href="#cut"/></svg></button></div><div><button class="sq" aria-label="Copy"><svg class="ic"><use href="#copy"/></svg></button></div><div><button class="sq" aria-label="Match properties"><svg class="ic"><use href="#match"/></svg></button></div></div>
   </div>
   <div class="ptitle">Clipboard</div>
  </div>
 </section>

 <div class="ftabs d-flex align-items-start">
  <div class="ftab d-flex align-items-center justify-content-between pe-3 ps-3"><svg width="136" height="25"><path fill="url(#gTab)" stroke="#d8d8d8" d="M0 25C10 24 8 2 18 2h102c10 0 8 21 18 23"/></svg><span>blog*</span><button aria-label="Close tab"><svg width="8" height="8" class="d-block" stroke="#777" stroke-width="2"><path d="M1 1l6 6M7 1L1 7"/></svg></button></div>
  <button class="mt-2" aria-label="New tab"><svg width="24" height="16" class="d-block"><path fill="#777" stroke="#555" d="M1 .5h15c4 0 6 4 6 15H9C5 15 3 5 1 .5z"/><path stroke="#aaa" stroke-width="3" d="M12 4v8M8 8h8"/></svg></button>
 </div>

 <main class="work d-flex flex-grow-1 overflow-hidden">
  <div class="canvas flex-grow-1">
   <svg class="draw" fill="none" shape-rendering="crispEdges">
    <defs><clipPath id="under"><path d="M284 351L320 346 342 339 354 331 367 339 380 352 395 370 410 386 423 398 450 410 478 417 500 419 530 422 560 426 580 428 640 429H1145L1183 434 1240 438V490H284z"/></clipPath></defs>
    <text class="vp" x="8" y="244">[−][Top][2D Wireframe]</text>
    <g id="grid" stroke="#8f9294" clip-path="url(#under)"></g>
    <path stroke="#f00" d="M284 351L320 345 322 342 342 339 354 331 367 339 380 352 395 370 410 386 423 398 450 410 478 417 500 419 530 422 560 426 580 428 640 429"/>
    <path stroke="#f00" d="M1074 429L1120 428 1150 431 1183 434 1240 438"/>
    <path stroke="#00f" d="M235.500 293V640M37.500 490V640M37 539.500H1240M37 589.500H1240M37 639.500H1240" opacity=".8"/>
    <path stroke="#00f" stroke-width="2" d="M235 293H1240M37 491H1240"/>
    <path stroke="#fff" d="M284 515.500H1026"/>
    <path stroke="#f00" d="M1026 515Q1110 496 1240 495"/>
    <g class="lbl"><text x="47" y="521">HORIZONTAL &nbsp;ALIGNMENT</text><text x="47" y="570">ELEVASI &nbsp; TANAH &nbsp; ASLI</text><text x="47" y="620">STATION</text></g>
    <text x="635" y="513" font-size="9" fill="#fff">LT=374.33</text>
    <g id="nums" class="num"></g>
    <path stroke="#fff" shape-rendering="auto" d="M20 612L26.500 619 33 612M26.500 619V625M73 665L86 678M86 665L73 678"/>
    <path stroke="#fff" d="M18.500 629V678.500H69M14.500 674.500h9v9h-9z"/>
    <path stroke="#fff" d="M787.500 347V376M787.500 383V412M755 379.500H784M791 379.500H820M784.500 376.500h6v6h-6z"/>
   </svg>
   <svg class="cube" width="88" height="92" fill="none"><circle cx="44" cy="44" r="35" stroke="#4a5058" stroke-width="8"/><rect x="27.500" y="27.500" width="33" height="33" fill="#9aa0a5" stroke="#bfc3c6" stroke-width="3"/><g font-family="Liberation Sans" font-weight="700" fill="#b4b8bc" text-anchor="middle"><text x="44" y="13" font-size="14">N</text><text x="44" y="87" font-size="14">S</text><text x="8" y="50" font-size="14">W</text><text x="81" y="50" font-size="14">E</text><text x="44" y="47" font-size="8" fill="#333">TOP</text></g></svg>
   <button class="wcs text-start ps-1">WCS <svg width="10" height="7"><path d="M1 1h8L5 6z" fill="none" stroke="#aab"/></svg></button>
   <div class="navbar3"><svg width="32" height="212" fill="none" stroke="#4f5459" stroke-width="1.500"><circle cx="26" cy="5" r="3.500"/><circle cx="16" cy="30" r="10"/><circle cx="16" cy="30" r="5"/><path d="M16 20h10v10M13 50l3 3 3-3z"/><path d="M8 72l-3-5 3-1 3 4v-8h3v-2h3v2h3v2l2 1v12l-4 6h-6z"/><path d="M7 95l12 12M19 95L7 107M5 93h5M5 93v5M21 93h-5M21 109l-6-6"/><circle cx="19" cy="105" r="4"/><path d="M22 108l5 5M13 120h6l-3 3z"/><ellipse cx="16" cy="138" rx="10" ry="5"/><path d="M16 128v22M13 157h6l-3 3zM5.500 169.500h6v6h-6zM13.500 169.500h6v6h-6zM21.500 169.500h6v6h-6zM5.500 179.500h15v12h-15zM10 182l6 3.500-6 3.500z"/><circle cx="26" cy="206" r="3.500"/></svg></div>
   <svg class="draw" fill="#fff" font-size="11"><text x="1196" y="513">LC=20</text><text x="1199" y="526">R=20</text></svg>
   <div class="tip3 d-flex align-items-center gap-2"><svg class="ic"><use href="#ptip"/></svg><span class="me-1">Profile Latihan</span><span class="me-2">SZ</span><span class="me-2">0+253.64m</span><span>97.59m</span></div>
  </div>
  <aside class="side"><div class="d-flex flex-column align-items-center h-100" id="side"></div></aside>
 </main>
 <div class="badge3">74</div>

 <footer class="status d-flex">
  <div class="coord">22444.250, 20731.771, 0.000</div>
 </footer>
 <svg class="wm" aria-hidden="true"><text transform="translate(182 607) rotate(-26.1)">www.daerojattin.blogspot.com</text></svg>
</div>
<script src="https://cdn.jsdelivr.net/npm/bootstrap@5.3.0/dist/js/bootstrap.bundle.min.js"></script>
<script>
const ic = n => `<svg class="ic"><use href="#${n}"/></svg>`;
const caret = '<i class="caret"></i>';
const sq = (n, c = '') => `<button class="sq ${c}" aria-label="${n}">${ic(n)}</button>`;
const split = n => `<span class="d-flex">${sq(n)}<button class="sq dd" aria-label="${n} options">${caret}</button></span>`;
const $ = id => document.getElementById(id);
$('drawTools').innerHTML = [['line','arc','pline'],['pts','circ','rect'],['spl','ell','hatch']].map(r =>
  `<div><button class="sq s34 me-1" aria-label="${r[0]}">${ic(r[0])}${caret}</button>${split(r[1])}<span class="ms-1">${sq(r[2])}</span></div>`).join('');
$('modTools').innerHTML = [['move','rot','trim','erase'],['copy2','mirror','fillet','box3'],['stretch','scale','array','offset']].map(r =>
  `<div class="gap-1">${sq(r[0])}${sq(r[1])}${split(r[2])}${sq(r[3])}</div>`).join('');
$('layTools').innerHTML = sq('l1') + sq('l2') + [['l3','l4'],['l5','l6'],['l7','l8']].map(p =>
  `<span class="d-flex">${sq(p[0])}${sq(p[1],'joined')}</span>`).join('');
$('side').innerHTML = 't1 ang t3 t4 t5 t6 t7 n1 n2 n3 n4 n5 n6 - n7 n8 n9 n10 - d1 d2 d3'.split(' ').map(n =>
  n === '-' ? '<hr>' : `<button aria-label="${n}">${ic(n)}</button>`).join('');
/* status bar toggles */
const on = [4,5,7,8,9,11];
let s = '';
for (let i = 0; i < 15; i++) s += `<button class="sb ${on.includes(i) ? 'on' : ''}" aria-label="Toggle ${i + 1}">${ic('s' + (i + 1))}</button>`;
document.querySelector('.status').insertAdjacentHTML('beforeend', s + `<span class="sb flex-grow-1 bg-transparent" style="background-image:none"></span>
<button class="sb txt w-model">MODEL</button><button class="sb on" aria-label="Model">${ic('m1')}</button><button class="sb" aria-label="Layout">${ic('m2')}</button><button class="sb" aria-label="Quick view layouts">${ic('m3')}</button><button class="sb" aria-label="Quick view drawings">${ic('m4')}</button>
<span class="sb w-gap"></span><button class="sb txt w-scale gap-1">${ic('sc')}1:1000<i class="caret big"></i></button><button class="sb" aria-label="Annotation visibility">${ic('sc2')}</button><button class="sb" aria-label="Auto scale">${ic('scg')}</button>
<span class="sb w-thin"></span><button class="sb" aria-label="Workspace switching">${ic('gear')}</button><button class="sb" aria-label="Lock">${ic('lockg')}</button><button class="sb" aria-label="Performance">${ic('perf')}</button>
<span class="sb w-tray"><span class="d-flex gap-1 px-1 border border-dark" style="background:#8a8a8a">${ic('pdf')}${ic('bulb')}</span></span><button class="sb w-arrow" aria-label="Tray">${caret}</button><button class="sb" aria-label="Clean screen">${ic('clean')}</button><span class="sb w-grip"><svg width="12" height="12" fill="#ddd"><path d="M8 0h2v2H8zM4 4h2v2H4zM8 4h2v2H8zM0 8h2v2H0zM4 8h2v2H4zM8 8h2v2H8z"/></svg></span>`);
/* profile view grid, band ticks and labels */
let g = '', n = '';
for (let i = 0; i < 97; i++) { const x = Math.round(284 + i * 9.91) + .5; g += `<path d="M${x} 320V490"/>`; }
for (let y = 351; y < 490; y += 20) g += `<path d="M284 ${y - (y > 420 ? 1 : 0) + .5}H1240"/>`;
$('grid').innerHTML = g;
const el = '99.000 99.532 98.734 96.446 95.720 95.444 95.197 95.114 95.059 95.047 95.034 94.992 95.001 95.055 95.027 95.041 95.105 95.080 94.863'.split(' ');
for (let i = -1; i < 20; i++) {
  const x = Math.round(284 + i * 49.55);
  n += `<path stroke="#fff" d="M${x + .5} 540V640"/>`;
  if (i > 18) break;
  const st = i < 0 ? '−0+025' : '0+' + String(i * 25).padStart(3, '0');
  n += `<text fill="#fff" transform="translate(${x + 15} ${i < 0 ? 633 : 624}) rotate(-90)">${st}</text>`;
  if (i >= 0) n += `<text fill="#1fae00" transform="translate(${x + 15} 582) rotate(-90)">${el[i]}</text>`;
}
$('nums').innerHTML = n;
</script>
</body>
</html>
